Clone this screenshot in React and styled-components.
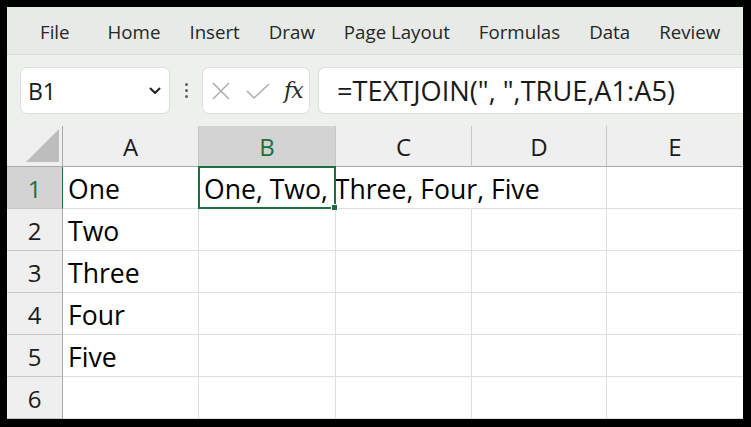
import React from "react";
import styled, { createGlobalStyle } from "styled-components";

const Global = createGlobalStyle`
  html, body { margin: 0; padding: 0; background: #000; }
  * { box-sizing: border-box; }
`;

const Frame = styled.div`
  width: 751px;
  height: 427px;
  background: #000;
  padding: 7px 8px 8px 7px;
  font-family: "Open Sans", "Noto Sans", sans-serif;
`;

const Window = styled.div`
  width: 736px;
  height: 412px;
  background: #fff;
  display: flex;
  flex-direction: column;
  overflow: hidden;
`;

const MenuBar = styled.div`
  height: 48px;
  flex: none;
  background: #e7eae7;
  display: flex;
  align-items: center;
  padding: 2px 0 0 33px;
  gap: 29px;
  border-bottom: 1px solid #d9dcd9;
`;

const Tab = styled.span`
  font-size: 18.7px;
  color: #262626;
  margin-right: ${(p) => (p.$first ? "9px" : "0")};
  white-space: nowrap;
`;

const FormulaArea = styled.div`
  height: 71px;
  flex: none;
  background: #eef0ee;
  display: flex;
  align-items: flex-start;
  padding: 12px 0 0 13px;
`;

const Box = styled.div`
  height: 47px;
  background: #fff;
  border: 1px solid #dcdedc;
  border-radius: 7px;
  display: flex;
  align-items: center;
`;

const NameBox = styled(Box)`
  width: 150px;
  padding: 0 8px 0 7px;
  justify-content: space-between;
  font-size: 23px;
  color: #1a1a1a;
`;

const Dots = styled.div`
  width: 32px;
  height: 47px;
  display: flex;
  flex-direction: column;
  align-items: center;
  justify-content: center;
  gap: 3px;
`;

const Dot = styled.span`
  width: 3px;
  height: 3px;
  border-radius: 50%;
  background: #5f5f5f;
`;

const FxBox = styled(Box)`
  width: 108px;
  padding: 0 0 0 8px;
`;

const Fx = styled.span`
  font-family: "DejaVu Serif", "Liberation Serif", serif;
  font-style: italic;
  font-size: 22px;
  color: #2a2a2a;
  margin-left: 13px;
  letter-spacing: -1px;
`;

const FormulaBox = styled(Box)`
  flex: 1;
  margin-left: 8px;
  border-radius: 7px 0 0 7px;
  border-right: none;
  padding-left: 18px;
  font-size: 27.2px;
  color: #1a1a1a;
  white-space: nowrap;
`;

const Grid = styled.div`
  display: grid;
  grid-template-columns: 56px 136px 137px 136px 135px 137px;
  grid-template-rows: 41px repeat(6, 42px);
  flex: none;
`;

const Corner = styled.div`
  background: #efefef;
  border-right: 1px solid #a9a9a9;
  border-bottom: 1px solid #a9a9a9;
  display: flex;
  align-items: flex-end;
  justify-content: flex-end;
  padding: 0 3px 4px 0;
`;

const ColHead = styled.div`
  background: ${(p) => (p.$sel ? "#d3d3d3" : "#efefef")};
  border-right: 1px solid #c6c6c6;
  border-bottom: 1px solid ${(p) => (p.$sel ? "#1e6e42" : "#a9a9a9")};
  display: flex;
  align-items: center;
  justify-content: center;
  font-size: 24px;
  padding-top: 1px;
  color: ${(p) => (p.$sel ? "#1e6e42" : "#1a1a1a")};
`;

const RowHead = styled.div`
  background: ${(p) => (p.$sel ? "#d3d3d3" : "#efefef")};
  border-right: 1px solid ${(p) => (p.$sel ? "#1e6e42" : "#a9a9a9")};
  border-bottom: 1px solid #c6c6c6;
  display: flex;
  align-items: center;
  justify-content: center;
  font-size: 24px;
  padding-top: 2px;
  color: ${(p) => (p.$sel ? "#1e6e42" : "#1a1a1a")};
`;

const Cell = styled.div`
  position: relative;
  background: #fff;
  border-right: 1px solid ${(p) => (p.$noRight ? "#fff" : "#dfdfdf")};
  border-bottom: 1px solid #dfdfdf;
  display: flex;
  align-items: center;
  padding: 3px 0 0 5px;
  font-size: 26.6px;
  color: #000;
  white-space: nowrap;
  overflow: visible;
  z-index: ${(p) => (p.$top ? 2 : 1)};
`;

const Selection = styled.div`
  position: absolute;
  left: -1px;
  top: -1px;
  right: -1px;
  bottom: -1px;
  border: 2px solid #1e6e42;
  pointer-events: none;
`;

const Handle = styled.div`
  position: absolute;
  right: -4px;
  bottom: -4px;
  width: 7px;
  height: 7px;
  background: #1e6e42;
  border: 1px solid #fff;
`;

const tabs = ["File", "Home", "Insert", "Draw", "Page Layout", "Formulas", "Data", "Review"];
const cols = ["A", "B", "C", "D", "E"];
const colA = ["One", "Two", "Three", "Four", "Five", ""];

export default function App() {
  return (
    <>
      <Global />
      <Frame>
        <Window>
          <MenuBar>
            {tabs.map((t, i) => (
              <Tab key={t} $first={i === 0}>{t}</Tab>
            ))}
          </MenuBar>
          <FormulaArea>
            <NameBox>
              <span>B1</span>
              <svg width="12" height="8" viewBox="0 0 12 8">
                <path d="M1.5 1.5 L6 6 L10.5 1.5" fill="none" stroke="#222" strokeWidth="2" strokeLinecap="round" strokeLinejoin="round" />
              </svg>
            </NameBox>
            <Dots>
              <Dot />
              <Dot />
              <Dot />
            </Dots>
            <FxBox>
              <svg width="20" height="20" viewBox="0 0 20 20">
                <path d="M2 2 L18 18 M18 2 L2 18" stroke="#b0b0b0" strokeWidth="1.6" fill="none" />
              </svg>
              <svg width="26" height="20" viewBox="0 0 26 20" style={{ marginLeft: 14 }}>
                <path d="M2 10 L9 17 L24 3" stroke="#b0b0b0" strokeWidth="1.6" fill="none" />
              </svg>
              <Fx>fx</Fx>
            </FxBox>
            <FormulaBox>=TEXTJOIN(", ",TRUE,A1:A5)</FormulaBox>
          </FormulaArea>
          <Grid>
            <Corner>
              <svg width="33" height="33" viewBox="0 0 33 33">
                <polygon points="33,0 33,33 0,33" fill="#bdbdbd" />
              </svg>
            </Corner>
            {cols.map((c) => (
              <ColHead key={c} $sel={c === "B"}>{c}</ColHead>
            ))}
            {colA.map((v, r) => (
              <React.Fragment key={r}>
                <RowHead $sel={r === 0}>{r + 1}</RowHead>
                <Cell>{v}</Cell>
                {r === 0 ? (
                  <Cell $top>
                    One, Two, Three, Four, Five
                    <Selection>
                      <Handle />
                    </Selection>
                  </Cell>
                ) : (
                  <Cell />
                )}
                <Cell $noRight={r === 0} />
                <Cell />
                <Cell />
              </React.Fragment>
            ))}
          </Grid>
        </Window>
      </Frame>
    </>
  );
}
